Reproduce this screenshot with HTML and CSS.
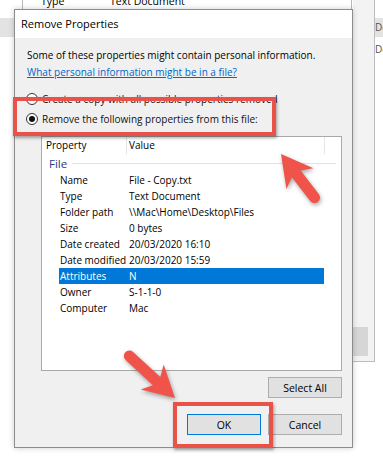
FILE: index.html
```html
<!DOCTYPE html>
<html lang="en">
<head>
    <meta charset="UTF-8">
    <meta name="viewport" content="width=device-width, initial-scale=1.0">
    <title>Remove Properties</title>
    <link rel="stylesheet" href="styles.css">
</head>
<body>
    <div class="desk">
        <!-- Parent Properties window, behind the dialog -->
        <div class="parent-list">
            <span class="pl-prop">Type</span><span>Text Document</span>
        </div>
        <div class="band band-left"></div>
        <div class="band band-right">Dc</div>
        <div class="side-text">Dc</div>
        <div class="parent-edge">
            <div class="parent-button"></div>
        </div>

        <!-- Remove Properties dialog -->
        <div class="dialog">
            <div class="titlebar">Remove Properties</div>
            <div class="dialog-body">
                <p class="intro">Some of these properties might contain personal information.</p>
                <a class="help-link" href="#">What personal information might be in a file?</a>

                <label class="radio">
                    <span class="radio-circle"></span>
                    Create a copy with all possible properties removed
                </label>
                <label class="radio">
                    <span class="radio-circle checked"></span>
                    Remove the following properties from this file:
                </label>

                <div class="listview">
                    <div class="lv-header">
                        <span class="col-prop">Property</span>
                        <span class="col-val">Value</span>
                    </div>
                    <div class="lv-group">
                        <span>File</span>
                        <i class="group-line"></i>
                    </div>
                    <div class="lv-rows">
                        <div class="lv-row"><span class="lv-key">Name</span><span>File - Copy.txt</span></div>
                        <div class="lv-row"><span class="lv-key">Type</span><span>Text Document</span></div>
                        <div class="lv-row"><span class="lv-key">Folder path</span><span>\\Mac\Home\Desktop\Files</span></div>
                        <div class="lv-row"><span class="lv-key">Size</span><span>0 bytes</span></div>
                        <div class="lv-row"><span class="lv-key">Date created</span><span>20/03/2020 16:10</span></div>
                        <div class="lv-row"><span class="lv-key">Date modified</span><span>20/03/2020 15:59</span></div>
                        <div class="lv-row selected"><span class="lv-key">Attributes</span><span>N</span></div>
                        <div class="lv-row"><span class="lv-key">Owner</span><span>S-1-1-0</span></div>
                        <div class="lv-row"><span class="lv-key">Computer</span><span>Mac</span></div>
                    </div>
                </div>

                <div class="select-row">
                    <button class="btn">Select All</button>
                </div>
                <div class="footer">
                    <button class="btn btn-ok">OK</button>
                    <button class="btn">Cancel</button>
                </div>
            </div>
        </div>

        <!-- Red annotations -->
        <div class="mark mark-radio"></div>
        <div class="mark mark-ok"></div>
        <svg class="arrows" width="383" height="457" viewBox="0 0 383 457">
            <path transform="translate(281 154) rotate(52.4)" d="M0,0 L31,-17 L25,-5.5 L55,-5.5 A5.5,5.5 0 0 1 55,5.5 L25,5.5 L31,17 Z"/>
            <path transform="translate(175 398) rotate(222.6)" d="M0,0 L31,-17 L25,-5.5 L62,-5.5 A5.5,5.5 0 0 1 62,5.5 L25,5.5 L31,17 Z"/>
        </svg>
    </div>
</body>
</html>
```

FILE: styles.css
```css
body {
    margin: 0;
    padding: 0;
    background-color: #fff;
    font-family: "Open Sans", "Noto Sans", sans-serif;
    font-size: 10px;
    color: #000;
}
.desk {
    position: relative;
    width: 383px;
    height: 457px;
    overflow: hidden;
}

/* parent window pieces */
.parent-list {
    position: absolute;
    left: 22px;
    top: -10px;
    width: 330px;
    height: 19px;
    border-left: 1px solid #b9b9b9;
    border-right: 1px solid #b9b9b9;
    background: #fff;
    display: flex;
    align-items: center;
    padding-top: 3px;
    box-sizing: border-box;
    font-size: 10.5px;
}
.pl-prop {
    padding-left: 18px;
    width: 69px;
}
.band {
    position: absolute;
    top: 18px;
    height: 19px;
    background: #e3e3e3;
}
.band-left {
    left: 0;
    width: 14px;
}
.band-right {
    left: 375px;
    width: 8px;
    line-height: 19px;
    color: #555;
    white-space: nowrap;
}
.side-text {
    position: absolute;
    left: 375px;
    top: 42px;
    color: #555;
    white-space: nowrap;
}
.parent-edge {
    position: absolute;
    left: 353px;
    top: 0;
    width: 22px;
    height: 362px;
    background: #f3f3f3;
    border-right: 1px solid #bdbdbd;
    border-bottom: 1px solid #bdbdbd;
    box-sizing: border-box;
}
.parent-button {
    margin-top: 327px;
    width: 15px;
    height: 29px;
    background: #d6d6d6;
}

/* dialog */
.dialog {
    position: absolute;
    left: 14px;
    top: 9px;
    width: 339px;
    height: 439px;
    box-sizing: border-box;
    border: 1px solid #8c8c8c;
    background: #f0f0f0;
    box-shadow: 0 0 6px rgba(0, 0, 0, 0.2);
}
.titlebar {
    height: 28px;
    line-height: 28px;
    padding-left: 6px;
    background: #fff;
    font-size: 11px;
}
.dialog-body {
    padding: 9px 10px 0 12px;
}
.intro {
    margin: 0;
    line-height: 17px;
}
.help-link {
    display: block;
    line-height: 17px;
    color: #0066cc;
}
.radio {
    display: flex;
    align-items: center;
    height: 16px;
    margin-top: 4px;
    margin-left: -1px;
    color: #111;
}
.help-link + .radio {
    margin-top: 10px;
}
.radio-circle {
    width: 10px;
    height: 10px;
    border: 1px solid #333;
    border-radius: 50%;
    margin-right: 4px;
    background: #fff;
    display: flex;
    align-items: center;
    justify-content: center;
}
.radio-circle.checked::after {
    content: "";
    width: 6px;
    height: 6px;
    border-radius: 50%;
    background: #111;
}

/* property list */
.listview {
    margin: 9px 0 0 14px;
    height: 235px;
    border: 1px solid #a9a9a9;
    background: #fff;
    box-sizing: border-box;
}
.lv-header {
    display: flex;
    height: 17px;
    line-height: 17px;
}
.col-prop {
    width: 80px;
    padding-left: 4px;
    border-right: 1px solid #e5e5e5;
}
.col-val {
    width: 195px;
    padding-left: 2px;
    border-right: 1px solid #e5e5e5;
}
.lv-group {
    display: flex;
    align-items: center;
    height: 18px;
    padding-left: 7px;
    padding-right: 5px;
    color: #1e3a8a;
    font-size: 11.5px;
}
.group-line {
    flex: 1;
    height: 1px;
    margin-left: 5px;
    background: #e2e2e2;
}
.lv-rows {
    margin-left: 17px;
    width: 265px;
}
.lv-row {
    display: flex;
    height: 16px;
    line-height: 16px;
    white-space: nowrap;
}
.lv-key {
    flex: none;
    width: 66px;
    padding-left: 1px;
    margin-right: 3px;
}
.lv-row.selected {
    background: #0078d7;
    color: #fff;
}

/* buttons */
.select-row,
.footer {
    display: flex;
    justify-content: flex-end;
    gap: 7px;
}
.select-row {
    margin-top: 6px;
}
.footer {
    margin-top: 16px;
}
.btn {
    width: 74px;
    height: 21px;
    padding: 0;
    font-family: inherit;
    font-size: 10.5px;
    color: #000;
    background: #e1e1e1;
    border: 1px solid #adadad;
}
.btn-ok {
    border: 1px solid #0078d7;
}

/* annotations */
.mark {
    position: absolute;
    border: 4px solid #ea5148;
    box-sizing: border-box;
    box-shadow: 1px 2px 3px rgba(0, 0, 0, 0.35);
}
.mark-radio {
    left: 13px;
    top: 97px;
    width: 263px;
    height: 39px;
}
.mark-ok {
    left: 173px;
    top: 402px;
    width: 100px;
    height: 46px;
}
.arrows {
    position: absolute;
    left: 0;
    top: 0;
    fill: #f0534a;
    filter: drop-shadow(1px 2px 2px rgba(0, 0, 0, 0.35));
}
```
